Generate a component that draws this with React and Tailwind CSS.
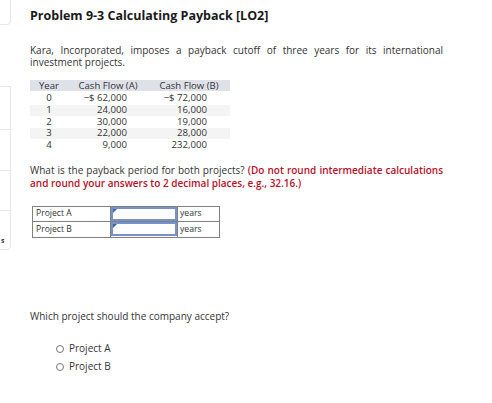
export default function App() {
  const rows = [
    ["0", "−$ 62,000", "−$ 72,000"],
    ["1", "24,000", "16,000"],
    ["2", "30,000", "19,000"],
    ["3", "22,000", "28,000"],
    ["4", "9,000", "232,000"],
  ];
  const font = { fontFamily: "'Open Sans', Lato, Arial, sans-serif" };
  return (
    <div className="relative w-[492px] h-[403px] bg-white overflow-hidden text-[#333]" style={font}>
      {/* left edge decorations */}
      <div className="absolute left-[-12px] top-[-12px] w-[23px] h-[37px] border border-[#e6e6e6] rounded-[4px]" />
      <div className="absolute left-[-12px] top-[86px] w-[23px] h-[164px] border border-[#e6e6e6] rounded-br-[4px] flex flex-col">
        <div className="h-[43px] border-b border-[#e6e6e6]" />
        <div className="h-[41px] border-b border-[#e6e6e6]" />
        <div className="h-[40px] border-b border-[#e6e6e6]" />
        <div className="flex-1 relative">
          <span className="absolute left-[12px] top-[26px] text-[7px] font-bold leading-none text-[#333]">s</span>
        </div>
      </div>

      <div className="pl-[30px] pr-[49px]">
        <h1 className="mt-[8px] text-[12.5px] font-bold leading-[16px] text-[#1a1a1a]">
          Problem 9-3 Calculating Payback [LO2]
        </h1>
        <p className="mt-[20px] text-[10px] leading-[12px] text-justify">
          Kara, Incorporated, imposes a payback cutoff of three years for its international investment projects.
        </p>

        <div className="mt-[12px] w-[200px] text-[9.6px] leading-none">
          <div className="flex h-[11px] items-center bg-[#dfe1e9]">
            <div className="w-[38px] text-center">Year</div>
            <div className="w-[80px] text-center">Cash Flow (A)</div>
            <div className="w-[82px] text-center">Cash Flow (B)</div>
          </div>
          {rows.map((r, i) => (
            <div
              key={i}
              className={`flex items-center ${i === 0 ? "h-[13.5px]" : "h-[11.5px]"} ${i % 2 === 1 ? "bg-[#f4f4f4]" : ""}`}
            >
              <div className="w-[38px] text-center">{r[0]}</div>
              <div className="w-[80px] text-right pr-[21px]">{r[1]}</div>
              <div className="w-[82px] text-right pr-[23px]">{r[2]}</div>
            </div>
          ))}
        </div>

        <p className="mt-[13px] text-[10px] leading-[13px] text-justify">
          What is the payback period for both projects?{" "}
          <span className="font-semibold text-[#b8102a]">
            (Do not round intermediate calculations and round your answers to 2 decimal places, e.g., 32.16.)
          </span>
        </p>

        <table className="mt-[16px] ml-[2px] border-collapse text-[8.6px] leading-none">
          <tbody>
            {["Project A", "Project B"].map((p) => (
              <tr key={p} className="h-[15.5px]">
                <td className="w-[78px] border border-[#808080] pl-[3px] align-middle">{p}</td>
                <td className="w-[67px] border border-[#808080] p-0 align-middle">
                  <div className="relative h-[14px] border-2 border-[#7593c8]">
                    <span className="absolute left-0 top-0 w-0 h-0 border-t-[4px] border-r-[4px] border-t-[#3b64b0] border-r-transparent" />
                  </div>
                </td>
                <td className="w-[42px] border border-[#808080] pl-[2px] align-middle">years</td>
              </tr>
            ))}
          </tbody>
        </table>

        <p className="mt-[72px] text-[10px] leading-[13px]">Which project should the company accept?</p>

        <div className="mt-[17px] pl-[26px] text-[10px]">
          {["Project A", "Project B"].map((p) => (
            <label key={p} className="flex items-center h-[18px] gap-[5px]">
              <span className="w-[8px] h-[8px] rounded-full border border-[#767676] bg-white" />
              <span>{p}</span>
            </label>
          ))}
        </div>
      </div>
    </div>
  );
}
